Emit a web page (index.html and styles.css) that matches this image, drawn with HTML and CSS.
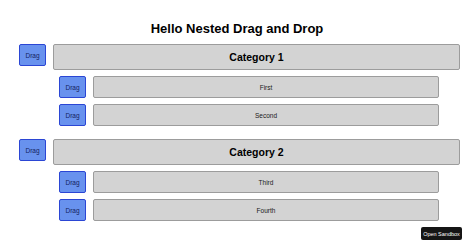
FILE: index.html
```html
<!DOCTYPE html>
<html>
<head>
<meta charset="utf-8">
<link rel="stylesheet" href="styles.css">
</head>
<body>
<h1 class="title">Hello Nested Drag and Drop</h1>
<div class="category">
  <div class="cat-row">
    <div class="handle">Drag</div>
    <div class="cat-box">Category 1</div>
  </div>
  <div class="items">
    <div class="item-row"><div class="handle">Drag</div><div class="item-box">First</div></div>
    <div class="item-row"><div class="handle">Drag</div><div class="item-box">Second</div></div>
  </div>
</div>
<div class="category">
  <div class="cat-row">
    <div class="handle">Drag</div>
    <div class="cat-box">Category 2</div>
  </div>
  <div class="items">
    <div class="item-row"><div class="handle">Drag</div><div class="item-box">Third</div></div>
    <div class="item-row"><div class="handle">Drag</div><div class="item-box">Fourth</div></div>
  </div>
</div>
<div class="sandbox">Open Sandbox</div>
</body>
</html>
```
FILE: styles.css
```css
html, body {
  margin: 0;
  background: #ffffff;
}
body {
  font-family: "Liberation Sans", Arial, Helvetica, sans-serif;
  padding-top: 21px;
  color: #111;
}
.title {
  margin: 0 0 8px;
  font-size: 13px;
  line-height: 15px;
  font-weight: bold;
  text-align: center;
  color: #000;
}
.category {
  margin-bottom: 13px;
}
.cat-row {
  display: flex;
  align-items: flex-start;
  gap: 7px;
  padding: 0 14px 0 19px;
}
.items {
  display: flex;
  flex-direction: column;
  gap: 6px;
  margin-top: 6px;
  padding: 0 35px 0 59px;
}
.item-row {
  display: flex;
  gap: 7px;
}
.handle {
  box-sizing: border-box;
  width: 27px;
  height: 22px;
  flex: none;
  background: #6892ee;
  border: 1px solid #2b46d4;
  border-radius: 2px;
  color: #14235f;
  font-size: 6.5px;
  display: flex;
  align-items: center;
  justify-content: center;
}
.cat-box {
  box-sizing: border-box;
  flex: 1;
  height: 26px;
  background: #d3d3d3;
  border: 1px solid #9c9c9c;
  border-radius: 2px;
  font-size: 10.5px;
  font-weight: bold;
  color: #000;
  display: flex;
  align-items: center;
  justify-content: center;
}
.item-box {
  box-sizing: border-box;
  flex: 1;
  height: 22px;
  background: #d3d3d3;
  border: 1px solid #9c9c9c;
  border-radius: 2px;
  font-size: 6.5px;
  color: #1a1a1a;
  display: flex;
  align-items: center;
  justify-content: center;
}
.sandbox {
  position: fixed;
  right: 12px;
  bottom: 8px;
  width: 41px;
  height: 13px;
  background: #151515;
  border-radius: 2px;
  color: #fff;
  font-size: 5.5px;
  display: flex;
  align-items: center;
  justify-content: center;
}
```
